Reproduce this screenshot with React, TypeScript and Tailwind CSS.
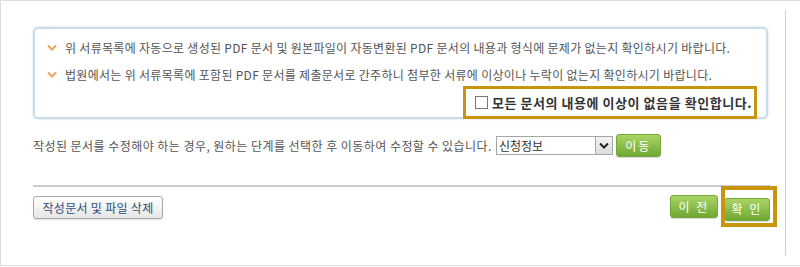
import React from 'react';

const font = { fontFamily: '"Noto Sans CJK KR", "Noto Sans", sans-serif' };

const Chevron = () => (
  <svg width="10" height="7" viewBox="0 0 10 7" className="shrink-0">
    <path d="M1 1.5 L5 5.5 L9 1.5" fill="none" stroke="#f0a25a" strokeWidth="2" />
  </svg>
);

const GreenButton = ({ label, className = '' }: { label: string; className?: string }) => (
  <button
    className={`h-[23px] rounded-[3px] border border-[#77a53c] bg-gradient-to-b from-[#a9d466] to-[#6fa832] text-[12px] text-white tracking-[2px] shadow-[0_1px_1px_rgba(0,0,0,0.15)] ${className}`}
  >
    {label}
  </button>
);

export default function App() {
  const notices = [
    '위 서류목록에 자동으로 생성된 PDF 문서 및 원본파일이 자동변환된 PDF 문서의 내용과 형식에 문제가 없는지 확인하시기 바랍니다.',
    '법원에서는 위 서류목록에 포함된 PDF 문서를 제출문서로 간주하니 첨부한 서류에 이상이나 누락이 없는지 확인하시기 바랍니다.',
  ];

  return (
    <div className="w-[800px] h-[266px] bg-white border-t border-l border-b border-[#dddddd]" style={font}>
      <div className="w-[785px] h-[245px] mt-[9px] border-r border-[#cccccc] pl-[32px] pr-[15px] pt-[17px]">
        {/* Notice box */}
        <div className="mr-[2px] rounded-[5px] border-2 border-[#cadcea] shadow-[0_0_2px_rgba(140,170,200,0.5)] pt-[5px]">
          {notices.map((t) => (
            <div key={t} className="flex items-center h-[27px] pl-[12px] gap-[8px] text-[12px] text-[#555555] tracking-[0.3px]">
              <Chevron />
              <span className="whitespace-nowrap">{t}</span>
            </div>
          ))}
          <div className="flex justify-end mr-[9px] -mt-[2px] -mb-[2px]">
            <label className="flex items-center h-[33px] w-[294px] border-[3px] border-[#c8960e] pl-[9px] gap-[4px]">
              <span className="w-[13px] h-[13px] border border-[#777777] bg-white shrink-0" />
              <span className="text-[13px] font-bold text-[#333333] tracking-[0.55px] whitespace-nowrap">
                모든 문서의 내용에 이상이 없음을 확인합니다.
              </span>
            </label>
          </div>
        </div>

        {/* Step move row */}
        <div className="flex items-center mt-[16px] h-[21px] gap-[4px] text-[12px] text-[#555555]">
          <span className="tracking-[0.45px] whitespace-nowrap">작성된 문서를 수정해야 하는 경우, 원하는 단계를 선택한 후 이동하여 수정할 수 있습니다.</span>
          <div className="flex w-[117px] h-[19px] border border-[#a5a5a5] bg-white">
            <span className="flex-1 pl-[2px] leading-[17px] text-[12px] text-[#333333]">신청정보</span>
            <span className="w-[17px] flex items-center justify-center border-l border-[#a5a5a5] bg-gradient-to-b from-[#f4f4f4] to-[#dcdcdc]">
              <svg width="10" height="7" viewBox="0 0 10 7">
                <path d="M1 1.5 L5 5.5 L9 1.5" fill="none" stroke="#222222" strokeWidth="2" />
              </svg>
            </span>
          </div>
          <GreenButton label="이동" className="w-[45px] h-[21px] ml-[-1px]" />
        </div>

        {/* Divider */}
        <div className="mt-[29px] h-[2px] bg-[#cccccc]" />

        {/* Bottom buttons */}
        <div className="flex items-start justify-between mt-[8px]">
          <button className="mt-[1px] w-[130px] h-[23px] rounded-[3px] border border-[#a9a9a9] bg-gradient-to-b from-[#ffffff] to-[#e6e6e6] text-[12px] text-[#2b4f7c] tracking-[0.3px] shadow-[0_1px_1px_rgba(0,0,0,0.12)]">
            작성문서 및 파일 삭제
          </button>
          <div className="flex gap-[6px]">
            <GreenButton label="이 전" className="w-[48px]" />
            <div className="relative">
              <GreenButton label="확 인" className="w-[46px]" />
              <div className="absolute left-[-3px] right-[-7px] top-[-9px] bottom-[-6px] border-[4px] border-[#c8960e] pointer-events-none" />
            </div>
          </div>
        </div>
      </div>
    </div>
  );
}
